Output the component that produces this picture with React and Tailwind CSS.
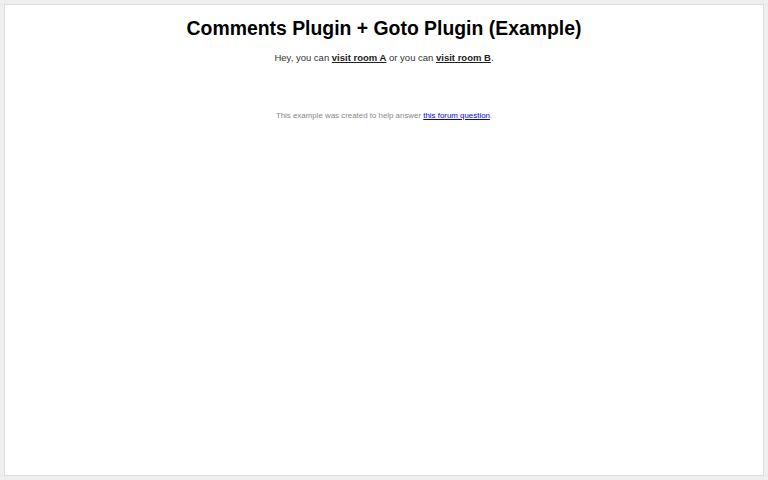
export default function App() {
  return (
    <div className="w-[768px] h-[480px] bg-[#eeeeee] p-[4px]" style={{ fontFamily: '"Liberation Sans", Arial, sans-serif' }}>
      <div className="h-[472px] bg-white border border-[#dddddd] flex flex-col items-center">
        <h1 className="mt-[11px] text-[19.4px] font-bold text-black leading-[24px]">Comments Plugin + Goto Plugin (Example)</h1>
        <p className="mt-[11px] text-[9.5px] text-[#333] leading-[14px]">
          Hey, you can <a className="font-bold underline text-[#222]" href="#">visit room A</a> or you can <a className="font-bold underline text-[#222]" href="#">visit room B</a>.
        </p>
        <p className="mt-[46px] text-[7.9px] text-[#888] leading-[10px]">
          This example was created to help answer <a className="underline text-[#0000ee]" href="#">this forum question</a>.
        </p>
      </div>
    </div>
  );
}
